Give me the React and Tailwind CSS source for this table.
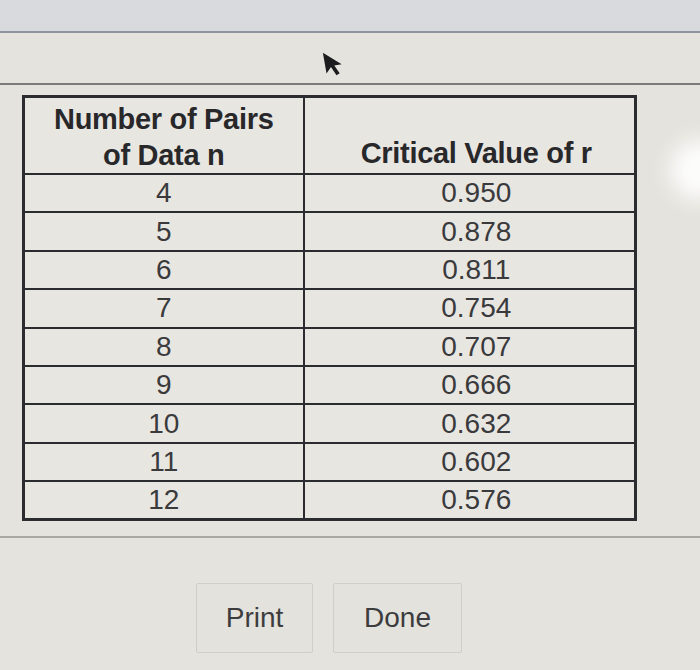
const rows = [
  ["4", "0.950"],
  ["5", "0.878"],
  ["6", "0.811"],
  ["7", "0.754"],
  ["8", "0.707"],
  ["9", "0.666"],
  ["10", "0.632"],
  ["11", "0.602"],
  ["12", "0.576"],
];

function Cursor() {
  return (
    <svg width="24" height="30" viewBox="0 0 24 30" className="rotate-[-10deg]">
      <path d="M3 2 L3 23 L8.5 17.5 L12.5 26.5 L16 25 L12 16.5 L19.5 16.5 Z" fill="#1c1c1e" />
    </svg>
  );
}

export default function App() {
  return (
    <div
      className="relative w-[700px] h-[670px] overflow-hidden bg-[#e5e3dd] text-[#2e2e30]"
      style={{ fontFamily: '"Liberation Sans", Arial, sans-serif' }}
    >
      {/* top strip */}
      <div className="h-[33px] bg-[#d9dadd] border-b-2 border-[#8e959e]" />
      <div className="h-[52px] border-b-2 border-[#7c7b7a] flex pl-[322px] pt-[16px]">
        <Cursor />
      </div>

      <div className="pt-[10px] pl-[22px]">
        <table className="border-collapse border-[3px] border-[#2a2c30] bg-[#e8e6e1] w-[615px]">
          <thead>
            <tr>
              <th className="w-[280px] h-[76px] border-2 border-[#2a2c30] align-top pt-[3px] text-[29px] leading-[36px] font-bold text-[#28282b] tracking-[-0.3px]">
                Number of Pairs
                <br />
                of Data n
              </th>
              <th className="h-[76px] border-2 border-[#2a2c30] align-bottom pb-[2px] text-[29px] leading-[36px] font-bold text-[#28282b] pl-[14px] tracking-[-0.3px]">
                Critical Value of r
              </th>
            </tr>
          </thead>
          <tbody>
            {rows.map(([n, r]) => (
              <tr key={n}>
                <td className="h-[38.4px] border-2 border-[#2a2c30] text-center text-[28px] leading-[34px] text-[#3a3a3c]">
                  {n}
                </td>
                <td className="h-[38.4px] border-2 border-[#2a2c30] text-center text-[28px] leading-[34px] text-[#3a3a3c] pl-[14px]">
                  {r}
                </td>
              </tr>
            ))}
          </tbody>
        </table>
      </div>

      <div className="mt-[15px] border-t-2 border-[#a9a8a5]" />

      <div className="flex gap-[20px] pl-[196px] pt-[45px]">
        <button className="w-[117px] h-[70px] border border-[#cfcec9] rounded-[2px] bg-[#e4e2dc] text-[28px] text-[#3c3c3e]">
          Print
        </button>
        <button className="w-[129px] h-[70px] border border-[#cfcec9] rounded-[2px] bg-[#e4e2dc] text-[28px] text-[#3c3c3e]">
          Done
        </button>
      </div>

      {/* screen glare */}
      <div className="absolute right-[-30px] top-[140px] w-[60px] h-[60px] rounded-full bg-white blur-[10px] opacity-90" />
    </div>
  );
}
